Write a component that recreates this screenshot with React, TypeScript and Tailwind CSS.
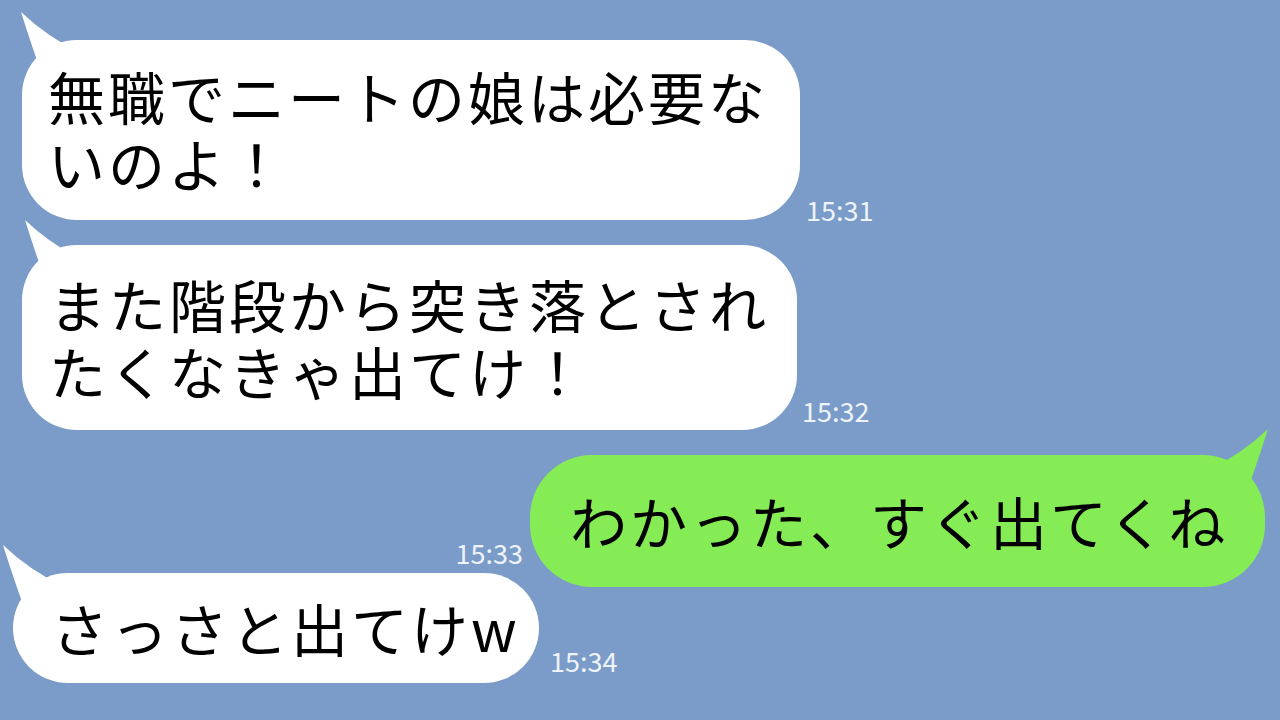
const jp = { fontFamily: '"Noto Sans CJK JP", "Noto Sans", sans-serif' };

function TailLeft({ className }: { className: string }) {
  return (
    <svg className={`absolute ${className}`} width="80" height="80" viewBox="0 0 80 80">
      <path d="M9 2 Q19 34 32 70 L70 44 Q34 26 9 2 Z" fill="currentColor" />
    </svg>
  );
}

function TailRight({ className }: { className: string }) {
  return (
    <svg className={`absolute ${className}`} width="80" height="80" viewBox="0 0 80 80">
      <path d="M71 2 Q61 34 48 70 L10 44 Q46 26 71 2 Z" fill="currentColor" />
    </svg>
  );
}

function Time({ children, className }: { children: string; className: string }) {
  return (
    <span
      className={`text-[27px] leading-none text-[#eef3fa] shrink-0 ${className}`}
      style={{ fontFamily: '"Noto Sans CJK JP", "Liberation Sans", sans-serif' }}
    >
      {children}
    </span>
  );
}

function Lines({ lines, className }: { lines: string[]; className: string }) {
  return (
    <div className={`relative text-[57px] tracking-[3px] text-black ${className}`}>
      {lines.map((l) => (
        <span key={l} className="block h-[67px] leading-[67px] whitespace-nowrap">
          {l}
        </span>
      ))}
    </div>
  );
}

export default function App() {
  return (
    <div className="w-[1280px] h-[720px] overflow-hidden bg-[#7b9cc8] pt-[40px] flex flex-col" style={jp}>
      {/* 1 */}
      <div className="flex items-end pl-[22px]">
        <div className="relative w-[778px] h-[180px] rounded-[55px] bg-white text-white">
          <TailLeft className="left-[-10px] top-[-30px]" />
          <Lines className="pl-[26px] pt-[22px]" lines={['無職でニートの娘は必要な', 'いのよ！']} />
        </div>
        <Time className="ml-[6px] mb-[-3px]">15:31</Time>
      </div>

      {/* 2 */}
      <div className="flex items-end pl-[22px] mt-[25px]">
        <div className="relative w-[775px] h-[185px] rounded-[55px] bg-white text-white">
          <TailLeft className="left-[-6px] top-[-27px]" />
          <Lines className="pl-[27px] pt-[25px]" lines={['また階段から突き落とされ', 'たくなきゃ出てけ！']} />
        </div>
        <Time className="ml-[5px] mb-[6px]">15:32</Time>
      </div>

      {/* 3 */}
      <div className="flex items-end justify-end pr-[15px] mt-[25px]">
        <Time className="mr-[7px] mb-[21px]">15:33</Time>
        <div className="relative w-[735px] h-[132px] rounded-[62px] bg-[#86ec55] text-[#86ec55] flex items-center">
          <TailRight className="right-[-12px] top-[-28px]" />
          <Lines className="pl-[40px] mt-[-2px]" lines={['わかった、すぐ出てくね']} />
        </div>
      </div>

      {/* 4 */}
      <div className="flex items-end pl-[13px] mt-[-14px]">
        <div className="relative w-[526px] h-[110px] rounded-[55px] bg-white text-white flex items-center">
          <TailLeft className="left-[-19px] top-[-30px]" />
          <Lines className="pl-[38px] mt-[-2px]" lines={['さっさと出てけw']} />
        </div>
        <Time className="ml-[11px] mb-[9px]">15:34</Time>
      </div>
    </div>
  );
}
